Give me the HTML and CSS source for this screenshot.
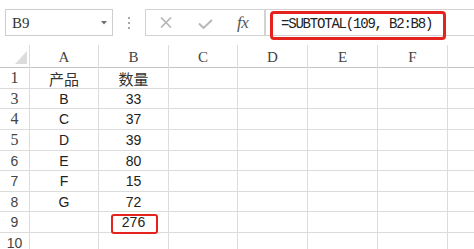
FILE: index.html
```html
<!DOCTYPE html>
<html lang="zh">
<head>
<meta charset="utf-8">
<title>SUBTOTAL</title>
<link rel="stylesheet" href="styles.css">
</head>
<body>
<div class="app">
  <div class="toolbar">
    <div class="namebox">
      <span class="ref">B9</span>
      <svg class="caret" width="6" height="4" viewBox="0 0 6 4"><polygon points="0,0 6,0 3,3.5" fill="#707070"/></svg>
    </div>
    <div class="grip"><i></i><i></i><i></i></div>
    <div class="fbtns">
      <svg class="ico-x" width="12" height="11" viewBox="0 0 12 11"><path d="M1 0.5 L11 10.5 M11 0.5 L1 10.5" stroke="#b4b4b4" stroke-width="1.6" fill="none"/></svg>
      <svg class="ico-ok" width="15" height="10" viewBox="0 0 15 10"><path d="M1 4.5 L5.5 9 L14 1" stroke="#b8b8b8" stroke-width="2" fill="none"/></svg>
      <span class="fx">fx</span>
    </div>
    <div class="finput">
      <span class="formula">=SUBTOTAL(109, B2:B8)</span>
      <div class="mark mark-formula"></div>
    </div>
  </div>

  <div class="sheet">
    <div class="corner"><svg width="12" height="13" viewBox="0 0 12 13"><polygon points="12,0 12,13 0,13" fill="#dcdcdc"/></svg></div>
    <div class="colh">A</div><div class="colh">B</div><div class="colh">C</div><div class="colh">D</div><div class="colh">E</div><div class="colh">F</div><div class="colh"></div>

    <div class="rowh serif">1</div><div class="cell cjk">产品</div><div class="cell cjk">数量</div><div class="cell"></div><div class="cell"></div><div class="cell"></div><div class="cell"></div><div class="cell"></div>
    <div class="rowh serif">3</div><div class="cell">B</div><div class="cell">33</div><div class="cell"></div><div class="cell"></div><div class="cell"></div><div class="cell"></div><div class="cell"></div>
    <div class="rowh serif">4</div><div class="cell">C</div><div class="cell">37</div><div class="cell"></div><div class="cell"></div><div class="cell"></div><div class="cell"></div><div class="cell"></div>
    <div class="rowh serif">5</div><div class="cell">D</div><div class="cell">39</div><div class="cell"></div><div class="cell"></div><div class="cell"></div><div class="cell"></div><div class="cell"></div>
    <div class="rowh">6</div><div class="cell">E</div><div class="cell">80</div><div class="cell"></div><div class="cell"></div><div class="cell"></div><div class="cell"></div><div class="cell"></div>
    <div class="rowh">7</div><div class="cell">F</div><div class="cell">15</div><div class="cell"></div><div class="cell"></div><div class="cell"></div><div class="cell"></div><div class="cell"></div>
    <div class="rowh">8</div><div class="cell">G</div><div class="cell">72</div><div class="cell"></div><div class="cell"></div><div class="cell"></div><div class="cell"></div><div class="cell"></div>
    <div class="rowh">9</div><div class="cell"></div><div class="cell total">276<div class="mark mark-total"></div></div><div class="cell"></div><div class="cell"></div><div class="cell"></div><div class="cell"></div><div class="cell"></div>
    <div class="rowh">10</div><div class="cell"></div><div class="cell"></div><div class="cell"></div><div class="cell"></div><div class="cell"></div><div class="cell"></div><div class="cell"></div>
  </div>
</div>
</body>
</html>
```

FILE: styles.css
```css
* { box-sizing: border-box; }
html, body { margin: 0; padding: 0; background: #fff; }
body { width: 474px; height: 249px; overflow: hidden; }

.app { width: 474px; }

.toolbar {
  height: 45px;
  display: flex;
  align-items: flex-start;
  padding: 9px 0 0 5px;
}

.namebox {
  width: 108px;
  height: 27px;
  border: 1px solid #cdcdcd;
  display: flex;
  align-items: center;
  justify-content: space-between;
  padding: 2px 5px 0 6px;
}
.ref {
  font-family: "Liberation Serif", serif;
  font-size: 15px;
  color: #333;
}
.caret { margin-top: -1px; }

.grip {
  width: 32px;
  height: 27px;
  display: flex;
  flex-direction: column;
  align-items: center;
  justify-content: center;
  gap: 3px;
}
.grip i {
  display: block;
  width: 2px;
  height: 2px;
  background: #a8a8a8;
}

.fbtns {
  width: 120px;
  height: 27px;
  border: 1px solid #d2d2d2;
  display: flex;
  align-items: center;
  padding-left: 14px;
}
.ico-x { margin-right: 26px; }
.ico-ok { margin-right: 24px; margin-top: 2px; }
.fx {
  font-family: "Liberation Serif", serif;
  font-style: italic;
  font-size: 17px;
  color: #555;
  letter-spacing: -0.5px;
}

.finput {
  flex: 1;
  height: 27px;
  border: 1px solid #d2d2d2;
  border-right: none;
  position: relative;
  display: flex;
  align-items: center;
  padding-left: 15px;
  padding-top: 2px;
}
.formula {
  font-family: "Liberation Mono", monospace;
  font-size: 14px;
  letter-spacing: -1.2px;
  color: #222;
  white-space: pre;
}

.mark {
  position: absolute;
  border: 3px solid #e5221e;
  border-radius: 4px;
}
.mark-formula {
  left: 4px;
  top: 1px;
  width: 176px;
  height: 29px;
}

.sheet {
  display: grid;
  grid-template-columns: 29px 68px 69px 68px 69px 69px 69px 1fr;
  grid-template-rows: 22px 20px 19px 20px 20px 19px 20px 19px 20px 20px;
  gap: 1px;
  background: #dcdcdc;
}
.sheet > div {
  background: #fff;
  display: flex;
  align-items: center;
  justify-content: center;
}
.corner {
  align-items: flex-end !important;
  justify-content: flex-end !important;
  padding: 0 2px 3px 0;
}
.corner, .colh { box-shadow: 0 1px 0 #c4c4c4; }
.colh {
  font-family: "Liberation Serif", serif;
  font-size: 15px;
  color: #444;
  padding-top: 2px;
}
.rowh {
  font-family: "Liberation Sans", sans-serif;
  font-size: 14px;
  color: #444;
}
.rowh.serif {
  font-family: "Liberation Serif", serif;
  font-size: 16px;
}
.cell {
  font-family: "Liberation Sans", sans-serif;
  font-size: 14px;
  color: #222;
}
.cell.cjk {
  font-family: "Noto Sans CJK SC", sans-serif;
  font-size: 15px;
  color: #333;
}
.total { position: relative; }
.mark-total {
  left: 12px;
  top: 2px;
  width: 47px;
  height: 20px;
  border-width: 2.5px;
  border-radius: 3px;
}
```
